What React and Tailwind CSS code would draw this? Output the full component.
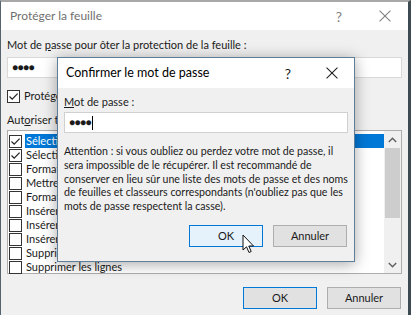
import React from 'react';

const font = { fontFamily: 'Lato, "Noto Sans", Arial, sans-serif' };

const Check = () => (
  <svg width="11" height="11" viewBox="0 0 11 11" fill="none">
    <path d="M1.5 5.5 L4.2 8.2 L9.6 2.6" stroke="#222" strokeWidth="1.2" />
  </svg>
);

const Box = ({ checked }) => (
  <span className="w-[13px] h-[13px] border border-[#333] bg-white flex items-center justify-center shrink-0">
    {checked && <Check />}
  </span>
);

const CloseX = ({ color = '#222', size = 11 }) => (
  <svg width={size} height={size} viewBox="0 0 11 11" fill="none">
    <path d="M0.5 0.5 L10.5 10.5 M10.5 0.5 L0.5 10.5" stroke={color} strokeWidth="1" />
  </svg>
);

const items = [
  'Sélectionner les cellules verrouillées',
  'Sélectionner les cellules déverrouillées',
  'Format de cellule',
  'Mettre en forme les colonnes',
  'Format de ligne',
  'Insérer des colonnes',
  'Insérer des lignes',
  'Insérer des liens hypertexte',
  'Supprimer les colonnes',
  'Supprimer les lignes',
];

const warning = [
  'Attention : si vous oubliez ou perdez votre mot de passe, il',
  'sera impossible de le récupérer. Il est recommandé de',
  'conserver en lieu sûr une liste des mots de passe et des noms',
  "de feuilles et classeurs correspondants (n'oubliez pas que les",
  'mots de passe respectent la casse).',
];

const Cursor = () => (
  <svg width="13" height="20" viewBox="0 0 13 20">
    <path d="M1 1 L1 16 L4.5 12.8 L7 18.5 L9.2 17.5 L6.8 12 L11.5 12 Z" fill="#fff" stroke="#111" strokeWidth="1" strokeLinejoin="round" />
  </svg>
);

export default function App() {
  return (
    <div className="relative w-[411px] h-[315px] overflow-hidden bg-[#f0f0f0] border-t-2 border-t-[#a8a8a8] border-l border-l-[#56636d] border-r-[3px] border-r-[#3d4a52] text-[11px] text-[#1a1a1a]" style={font}>
      {/* outer title bar */}
      <div className="h-[28px] bg-white flex items-center pl-[9px]">
        <span className="text-[12px] text-[#707070] flex-1">Protéger la feuille</span>
        <span className="w-[46px] text-center text-[14px] text-[#808080]">?</span>
        <span className="w-[46px] flex justify-center"><CloseX color="#808080" size={12} /></span>
      </div>

      <div className="px-[6px]">
        <div className="h-[16px] mt-[7px] leading-[16px]">
          Mot de <span className="underline">p</span>asse pour ôter la protection de la feuille :
        </div>
        <div className="mt-[4px] h-[21px] bg-white border border-[#d9d9d9] flex items-center pl-[4px] text-[10px] tracking-[-0.5px]">●●●●</div>
        <div className="mt-[10px] h-[16px] flex items-center gap-[4px]">
          <Box checked />
          <span>Protéger la feuille et le contenu des cellules verrouillées</span>
        </div>
        <div className="mt-[8px] h-[16px] leading-[16px]">
          Aut<span className="underline">o</span>riser tous les utilisateurs de cette feuille à :
        </div>
        <div className="mt-[2px] h-[144px] bg-white border border-[#adadad] flex">
          <div className="flex-1 pt-[3px] pl-[1px]">
            {items.map((t, i) => (
              <div key={t} className="h-[14px] flex items-center gap-[3px]">
                <Box checked={i < 2} />
                <span className={i === 0 ? 'bg-[#0078d7] text-white flex-1 leading-[14px] pl-[1px]' : 'leading-[14px] pl-[1px]'}>{t}</span>
              </div>
            ))}
          </div>
          <div className="w-[17px] bg-[#f0f0f0] flex flex-col items-center">
            <div className="h-[17px] flex items-center justify-center">
              <svg width="9" height="6" viewBox="0 0 9 6"><path d="M0.8 5 L4.5 1.3 L8.2 5" stroke="#606060" strokeWidth="1.4" fill="none" /></svg>
            </div>
            <div className="w-[15px] h-[70px] bg-[#cdcdcd]" />
            <div className="flex-1" />
            <div className="h-[17px] flex items-center justify-center">
              <svg width="9" height="6" viewBox="0 0 9 6"><path d="M0.8 1 L4.5 4.7 L8.2 1" stroke="#606060" strokeWidth="1.4" fill="none" /></svg>
            </div>
          </div>
        </div>
        <div className="mt-[13px] flex justify-end gap-[10px] pr-[1px]">
          <button className="w-[74px] h-[22px] bg-[#e1e1e1] border border-[#0078d7] text-[11px]" style={font}>OK</button>
          <button className="w-[74px] h-[22px] bg-[#e1e1e1] border border-[#adadad] text-[11px]" style={font}>Annuler</button>
        </div>
      </div>

      {/* confirm dialog on top */}
      <div className="absolute left-[56px] top-[55px] w-[298px] h-[205px] bg-[#f0f0f0] border border-[#5d7d99] shadow-[0_2px_14px_rgba(0,0,0,0.35)] flex flex-col">
        <div className="h-[30px] bg-white flex items-center pl-[8px]">
          <span className="text-[12.5px] text-black flex-1">Confirmer le mot de passe</span>
          <span className="w-[44px] text-center text-[14px]">?</span>
          <span className="w-[44px] flex justify-center"><CloseX color="#222" size={12} /></span>
        </div>
        <div className="px-[6px]">
          <div className="mt-[6px] h-[16px] leading-[16px]">
            <span className="underline">M</span>ot de passe :
          </div>
          <div className="mt-[2px] h-[21px] bg-white border border-[#d0d0d0] flex items-center pl-[4px]">
            <span className="text-[10px] tracking-[-0.5px]">●●●●</span>
            <span className="w-[1px] h-[14px] bg-black ml-[1px]" />
          </div>
          <div className="mt-[12px] text-[10.6px] leading-[13.8px]">
            {warning.map((l) => (
              <div key={l} className="whitespace-nowrap">{l}</div>
            ))}
          </div>
          <div className="mt-[11px] flex justify-end gap-[10px] pr-[1px]">
            <button className="w-[74px] h-[22px] bg-[#e5f1fb] border border-[#0078d7] text-[11px]" style={font}>OK</button>
            <button className="w-[74px] h-[22px] bg-[#e1e1e1] border border-[#adadad] text-[11px]" style={font}>Annuler</button>
          </div>
        </div>
      </div>

      <div className="absolute left-[241px] top-[232px]">
        <Cursor />
      </div>
    </div>
  );
}
